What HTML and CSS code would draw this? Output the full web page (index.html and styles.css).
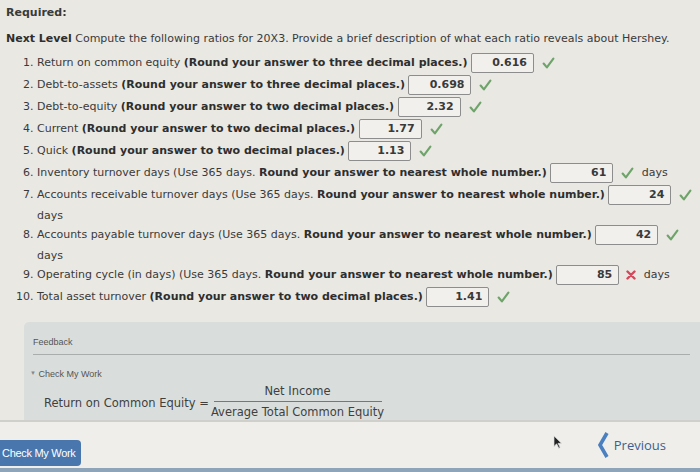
FILE: index.html
```html
<!DOCTYPE html>
<html lang="en">
<head>
<meta charset="UTF-8">
<title>Ratios - Check My Work</title>
<link rel="stylesheet" href="styles.css">
</head>
<body>
<div class="page">
  <div class="content">
    <p class="req">Required:</p>
    <p class="intro"><b>Next Level</b> Compute the following ratios for 20X3. Provide a brief description of what each ratio reveals about Hershey.</p>

    <ol class="ratios">
      <li>Return on common equity <b>(Round your answer to three decimal places.)</b> <span class="ans">0.616</span><svg class="ok" viewBox="0 0 12 11"><path d="M1.5 6 L4.5 9.5 L10.5 1.5"/></svg></li>
      <li>Debt-to-assets <b>(Round your answer to three decimal places.)</b> <span class="ans">0.698</span><svg class="ok" viewBox="0 0 12 11"><path d="M1.5 6 L4.5 9.5 L10.5 1.5"/></svg></li>
      <li>Debt-to-equity <b>(Round your answer to two decimal places.)</b> <span class="ans">2.32</span><svg class="ok" viewBox="0 0 12 11"><path d="M1.5 6 L4.5 9.5 L10.5 1.5"/></svg></li>
      <li>Current <b>(Round your answer to two decimal places.)</b> <span class="ans">1.77</span><svg class="ok" viewBox="0 0 12 11"><path d="M1.5 6 L4.5 9.5 L10.5 1.5"/></svg></li>
      <li>Quick <b>(Round your answer to two decimal places.)</b> <span class="ans">1.13</span><svg class="ok" viewBox="0 0 12 11"><path d="M1.5 6 L4.5 9.5 L10.5 1.5"/></svg></li>
      <li>Inventory turnover days (Use 365 days. <b>Round your answer to nearest whole number.)</b> <span class="ans">61</span><svg class="ok" viewBox="0 0 12 11"><path d="M1.5 6 L4.5 9.5 L10.5 1.5"/></svg> <span class="unit">days</span></li>
      <li>Accounts receivable turnover days (Use 365 days. <b>Round your answer to nearest whole number.)</b> <span class="ans">24</span><svg class="ok" viewBox="0 0 12 11"><path d="M1.5 6 L4.5 9.5 L10.5 1.5"/></svg><br><span class="wrap">days</span></li>
      <li>Accounts payable turnover days (Use 365 days. <b>Round your answer to nearest whole number.)</b> <span class="ans">42</span><svg class="ok" viewBox="0 0 12 11"><path d="M1.5 6 L4.5 9.5 L10.5 1.5"/></svg><br><span class="wrap">days</span></li>
      <li>Operating cycle (in days) (Use 365 days. <b>Round your answer to nearest whole number.)</b> <span class="ans">85</span><svg class="bad" viewBox="0 0 10 10"><path d="M1.5 1.5 L8.5 8.5 M8.5 1.5 L1.5 8.5"/></svg> <span class="unit">days</span></li>
      <li>Total asset turnover <b>(Round your answer to two decimal places.)</b> <span class="ans">1.41</span><svg class="ok" viewBox="0 0 12 11"><path d="M1.5 6 L4.5 9.5 L10.5 1.5"/></svg></li>
    </ol>

    <div class="feedback">
      <div class="fb-head">Feedback</div>
      <div class="fb-toggle"><span class="tri">&#9660;</span> Check My Work</div>
      <div class="formula">
        <span class="lhs">Return on Common Equity =</span>
        <span class="frac">
          <span class="num">Net Income</span>
          <span class="den">Average Total Common Equity</span>
        </span>
      </div>
    </div>
  </div>

  <div class="footer">
    <button class="check-btn">Check My Work</button>
    <svg class="pointer" viewBox="0 0 10 16"><path d="M1 1 L1 13 L4 10 L6.5 15 L8 14.3 L5.6 9.5 L9.5 9.5 Z"/></svg>
    <a class="prev" href="#">
      <svg class="chev" viewBox="0 0 12 28"><path d="M10 2 L3 14 L10 26"/></svg>
      Previous
    </a>
  </div>
</div>
</body>
</html>
```

FILE: styles.css
```css
body {
margin: 0;
background: #e9e8e3;
font-family: "DejaVu Sans", Verdana, sans-serif;
color: #3a3a3a;
}
.page {
width: 700px;
height: 472px;
display: flex;
flex-direction: column;
overflow: hidden;
}
.content {
height: 420px;
overflow: hidden;
padding: 5px 0 0 6px;
box-sizing: border-box;
font-size: 11px;
}
.req {
margin: 0;
font-weight: bold;
line-height: 15px;
}
.intro {
margin: 11px 0 6px;
line-height: 15px;
}
.intro b, .ratios b {
color: #2e2e2e;
}
.ratios {
margin: 0;
padding-left: 31px;
line-height: 16px;
}
.wrap {
display: inline-block;
padding-top: 2px;
}
.ans {
display: inline-block;
width: 63px;
height: 20px;
line-height: 18px;
box-sizing: border-box;
margin: 1px 0 1px;
padding-right: 6px;
border: 1px solid #8d8d8d;
border-radius: 2px;
background: #f1f0ec;
text-align: right;
font-weight: bold;
vertical-align: middle;
}
.ok, .bad {
vertical-align: middle;
fill: none;
stroke-linecap: round;
stroke-linejoin: round;
}
.ok {
width: 13px;
height: 12px;
margin-left: 8px;
stroke: #6ea36a;
stroke-width: 2;
}
.bad {
width: 10px;
height: 10px;
margin-left: 7px;
stroke: #d6475b;
stroke-width: 2.4;
}
.unit {
margin-left: 4px;
}
.feedback {
margin: 14px 0 0 18px;
background: #d9dedc;
border-radius: 5px 0 0 0;
padding: 13px 10px 0 9px;
height: 110px;
}
.fb-head {
font-family: "Liberation Sans", Arial, sans-serif;
font-size: 9px;
color: #555;
padding: 2px 0 7px;
border-bottom: 1px solid #a9adac;
}
.fb-toggle {
font-family: "Liberation Sans", Arial, sans-serif;
font-size: 9px;
color: #555;
margin: 14px 0 0 -3px;
}
.tri {
font-size: 6px;
color: #888;
vertical-align: 2px;
}
.formula {
display: flex;
align-items: center;
margin: 5px 0 0 11px;
font-size: 11.5px;
color: #3f3f3f;
}
.lhs {
margin-top: 3px;
}
.frac {
display: flex;
flex-direction: column;
align-items: center;
margin-left: 2px;
}
.num {
padding: 0 0 3px;
border-bottom: 1px solid #777;
width: 168px;
text-align: center;
}
.den {
padding-top: 3px;
}
.footer {
flex: 1;
position: relative;
background: #efeeea;
border-top: 2px solid #cfcfcb;
border-bottom: 4px solid #8ea4b8;
display: flex;
align-items: center;
justify-content: space-between;
padding: 0 34px 0 0;
}
.check-btn {
margin-top: 15px;
background: #4876ad;
color: #fff;
border: none;
border-radius: 0 4px 4px 0;
font-family: "Liberation Sans", Arial, sans-serif;
font-size: 11px;
letter-spacing: -0.3px;
padding: 7px 5px 7px 2px;
}
.pointer {
position: absolute;
left: 553px;
top: 13px;
width: 9px;
height: 14px;
fill: #222;
stroke: #ddd;
stroke-width: 0.8;
}
.prev {
display: flex;
align-items: center;
text-decoration: none;
color: #3d5f8f;
font-family: "Open Sans", sans-serif;
font-size: 13px;
}
.chev {
width: 12px;
height: 28px;
margin-right: 5px;
fill: none;
stroke: #4a7fc0;
stroke-width: 3.6;
stroke-linejoin: miter;
}
```
